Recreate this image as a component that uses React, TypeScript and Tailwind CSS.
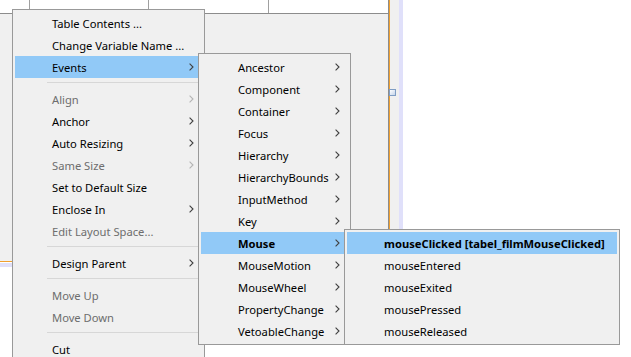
import React from "react";

type Item =
  | { sep: true }
  | { label: string; arrow?: boolean; disabled?: boolean; active?: boolean; bold?: boolean };

const Chevron = ({ disabled }: { disabled?: boolean }) => (
  <svg width="5" height="8" viewBox="0 0 5 8" className="shrink-0 -mt-[2px]">
    <path
      d="M0.6 0.6 L4 4 L0.6 7.4"
      fill="none"
      stroke={disabled ? "#b4b4b4" : "#404040"}
      strokeWidth="1.1"
    />
  </svg>
);

const Menu = ({ items, className }: { items: Item[]; className: string }) => (
  <div className={"absolute border border-[#999999] bg-[#f0f0f0] p-[2px] " + className}>
    {items.map((it, i) =>
      "sep" in it ? (
        <div key={i} className="h-[10px] pt-[4px] pl-[32px]">
          <div className="h-px bg-[#d7d7d7]" />
        </div>
      ) : (
        <div
          key={i}
          className={
            "h-[22px] flex items-center pt-[2px] pl-[37px] pr-[8px] whitespace-nowrap " +
            (it.active ? "bg-[#91c9f7] " : "") +
            (it.disabled ? "text-[#6d6d6d] " : "text-black ") +
            (it.bold ? "font-bold" : "")
          }
        >
          <span className="flex-1">{it.label}</span>
          {it.arrow && <Chevron disabled={it.disabled} />}
        </div>
      )
    )}
  </div>
);

const mainItems: Item[] = [
  { label: "Table Contents ..." },
  { label: "Change Variable Name ..." },
  { label: "Events", arrow: true, active: true },
  { sep: true },
  { label: "Align", arrow: true, disabled: true },
  { label: "Anchor", arrow: true },
  { label: "Auto Resizing", arrow: true },
  { label: "Same Size", arrow: true, disabled: true },
  { label: "Set to Default Size" },
  { label: "Enclose In", arrow: true },
  { label: "Edit Layout Space...", disabled: true },
  { sep: true },
  { label: "Design Parent", arrow: true },
  { sep: true },
  { label: "Move Up", disabled: true },
  { label: "Move Down", disabled: true },
  { sep: true },
  { label: "Cut" },
];

const eventItems: Item[] = [
  { label: "Ancestor", arrow: true },
  { label: "Component", arrow: true },
  { label: "Container", arrow: true },
  { label: "Focus", arrow: true },
  { label: "Hierarchy", arrow: true },
  { label: "HierarchyBounds", arrow: true },
  { label: "InputMethod", arrow: true },
  { label: "Key", arrow: true },
  { label: "Mouse", arrow: true, active: true, bold: true },
  { label: "MouseMotion", arrow: true },
  { label: "MouseWheel", arrow: true },
  { label: "PropertyChange", arrow: true },
  { label: "VetoableChange", arrow: true },
];

const mouseItems: Item[] = [
  { label: "mouseClicked [tabel_filmMouseClicked]", active: true, bold: true },
  { label: "mouseEntered" },
  { label: "mouseExited" },
  { label: "mousePressed" },
  { label: "mouseReleased" },
];

export default function App() {
  return (
    <div
      className="relative w-[631px] h-[357px] overflow-hidden bg-white text-[11.2px]"
      style={{ fontFamily: '"Noto Sans", "Open Sans", sans-serif' }}
    >
      {/* designer background */}
      <div className="flex flex-col w-[403px]">
        <div className="flex h-[262px]">
          <div className="w-[390px] border-r border-b border-[#f0a030] flex">
            <div className="w-[389px] border-r border-[#8c8c8c] flex flex-col">
              <div className="h-[14px] flex border-b border-[#8c8c8c] bg-white">
                <div className="w-[30px] border-r border-[#a0a0a0]" />
                <div className="w-[119px] border-r border-[#a0a0a0]" />
                <div className="w-[120px] border-r border-[#a0a0a0]" />
                <div className="flex-1" />
              </div>
              <div className="flex-1 bg-[#f0f0f0]" />
            </div>
          </div>
          <div className="w-[9px] bg-[#f0f0f0]" />
          <div className="w-[4px] bg-[#e0e0fa]" />
        </div>
        <div className="h-px" />
        <div className="h-[4px] bg-[#e0e0fa]" />
      </div>

      {/* selection handle */}
      <div className="absolute left-[389px] top-[89px] w-[7px] h-[7px] border border-[#7f9dc4] bg-gradient-to-br from-white to-[#c4d4ea]" />

      <Menu items={mainItems} className="left-[12px] top-[9px] w-[193px]" />
      <Menu items={eventItems} className="left-[198px] top-[53px] w-[153px]" />
      <Menu items={mouseItems} className="left-[344px] top-[229px] w-[276px]" />
    </div>
  );
}
